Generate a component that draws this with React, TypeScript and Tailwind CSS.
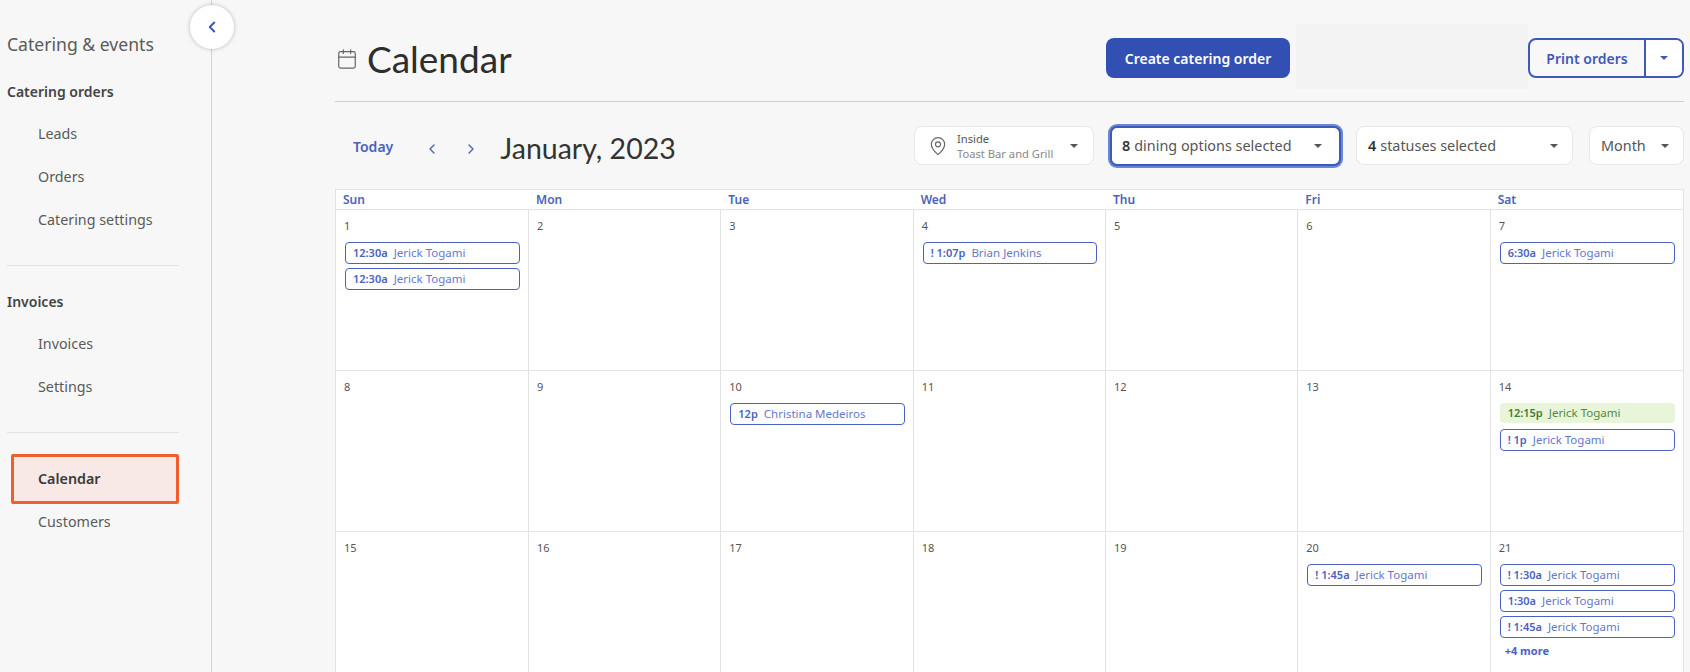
import React from "react";
import { ChevronLeft, ChevronRight, Calendar as CalIcon, MapPin } from "lucide-react";

const Caret = ({ c = "border-t-[#555555]" }: { c?: string }) => (
  <span className={`inline-block w-0 h-0 border-l-[4px] border-r-[4px] border-t-[4px] border-l-transparent border-r-transparent ${c}`} />
);

type Ev = { t: string; n: string; bang?: boolean; green?: boolean };
const Chip = ({ e }: { e: Ev }) => (
  <div className={`rounded-[4px] pr-[6px] flex items-center text-[11px] whitespace-nowrap ${e.green ? "h-[20px] mb-[2px] pl-[8px] bg-[#e9f5d9] text-[#3f7d35]" : "h-[22px] pl-[7px] border border-[#4a62c4] bg-white text-[#4a62c0]"}`}>
    <span className="font-semibold">{e.bang ? "! " : ""}{e.t}</span>
    <span className={`ml-[6px] text-[11.5px] ${e.green ? "text-[#4f8a45]" : "text-[#6478cc]"}`}>{e.n}</span>
  </div>
);

const J = "Jerick Togami";
const cells: { d: number; ev?: Ev[]; more?: boolean }[] = [
  { d: 1, ev: [{ t: "12:30a", n: J }, { t: "12:30a", n: J }] },
  { d: 2 },
  { d: 3 },
  { d: 4, ev: [{ t: "1:07p", n: "Brian Jenkins", bang: true }] },
  { d: 5 },
  { d: 6 },
  { d: 7, ev: [{ t: "6:30a", n: J }] },
  { d: 8 },
  { d: 9 },
  { d: 10, ev: [{ t: "12p", n: "Christina Medeiros" }] },
  { d: 11 },
  { d: 12 },
  { d: 13 },
  { d: 14, ev: [{ t: "12:15p", n: J, green: true }, { t: "1p", n: J, bang: true }] },
  { d: 15 },
  { d: 16 },
  { d: 17 },
  { d: 18 },
  { d: 19 },
  { d: 20, ev: [{ t: "1:45a", n: J, bang: true }] },
  { d: 21, ev: [{ t: "1:30a", n: J, bang: true }, { t: "1:30a", n: J }, { t: "1:45a", n: J, bang: true }], more: true },
];
const days = ["Sun", "Mon", "Tue", "Wed", "Thu", "Fri", "Sat"];

const NavItem = ({ children }: { children: React.ReactNode }) => (
  <div className="h-[43px] pl-[31px] flex items-center text-[14.3px] text-[#5a5a5a]">{children}</div>
);

export default function App() {
  return (
    <div className="w-[1690px] h-[672px] overflow-hidden flex bg-[#f7f7f7] text-[#333333] font-['Noto_Sans',sans-serif]">
      <aside className="relative w-[212px] shrink-0 border-r border-[#d4d4d4] pl-[7px] pr-[32px] pt-[30px]">
        <div className="text-[17.6px] leading-[28px] text-[#5a5a5a]">Catering &amp; events</div>
        <div className="mt-[24px] text-[14px] leading-[20px] font-semibold text-[#444444]">Catering orders</div>
        <div className="mt-[10px]">
          <NavItem>Leads</NavItem>
          <NavItem>Orders</NavItem>
          <NavItem>Catering settings</NavItem>
        </div>
        <div className="mt-[24px] h-px bg-[#e3e3e3]" />
        <div className="mt-[26px] text-[14px] leading-[20px] font-semibold text-[#444444]">Invoices</div>
        <div className="mt-[10px]">
          <NavItem>Invoices</NavItem>
          <NavItem>Settings</NavItem>
        </div>
        <div className="mt-[24px] h-px bg-[#e3e3e3]" />
        <div className="mt-[21px] ml-[4px] h-[50px] border-[3px] border-[#f0602c] rounded-[2px] bg-[#f8e9e6] flex items-center pl-[24px] text-[14.3px] font-semibold text-[#3a3a3a]">Calendar</div>
        <div className="h-[36px] pl-[31px] flex items-center text-[14.3px] text-[#5a5a5a]">Customers</div>
        <button className="absolute right-[-23px] top-[5px] z-10 w-[44px] h-[44px] rounded-full bg-white shadow-[0_0_4px_rgba(0,0,0,0.25)] flex items-center justify-center">
          <ChevronLeft size={18} strokeWidth={2.5} className="text-[#3a55b5]" />
        </button>
      </aside>

      <main className="flex-1 min-w-0 pl-[123px] pr-[6px]">
        <header className="h-[102px] border-b border-[#cfcfcf] flex items-start">
          <div className="flex items-center mt-[36px] h-[46px]">
            <CalIcon size={22} strokeWidth={1.3} className="text-[#666666] ml-[1px]" />
            <h1 className="ml-[9px] text-[37px] leading-[46px] font-['Lato',sans-serif] font-normal text-[#2e2e2e]">Calendar</h1>
          </div>
          <div className="ml-auto flex items-start">
            <button className="mt-[38px] w-[184px] h-[40px] rounded-[8px] bg-[#324fb3] text-white text-[14px] font-semibold">Create catering order</button>
            <div className="ml-[6px] mt-[24px] w-[232px] h-[65px] bg-[#f3f3f3]" />
            <div className="mt-[38px] flex h-[40px] w-[156px] rounded-[8px] border-2 border-[#3f59b8] bg-[#f8f8f8] overflow-hidden">
              <div className="w-[116px] flex items-center justify-center text-[14px] font-semibold text-[#3f59b8] border-r-2 border-[#3f59b8]">Print orders</div>
              <div className="flex-1 flex items-center justify-center bg-white"><Caret c="border-t-[#3f59b8]" /></div>
            </div>
          </div>
        </header>

        <div className="h-[87px] flex items-center">
          <div className="flex items-center mt-[6px]">
            <span className="ml-[18px] -mt-[4px] text-[14px] font-semibold text-[#4a62c0]">Today</span>
            <ChevronLeft size={16} strokeWidth={2} className="ml-[31px] text-[#4a62c0]" />
            <ChevronRight size={16} strokeWidth={2} className="ml-[23px] text-[#4a62c0]" />
            <span className="ml-[21px] text-[28.5px] font-['Lato',sans-serif] text-[#333333]">January, 2023</span>
          </div>
          <div className="ml-auto flex items-center">
            <div className="w-[180px] h-[39px] rounded-[8px] border border-[#e8e8e8] bg-white flex items-center pl-[13px] pr-[15px]">
              <MapPin size={20} strokeWidth={1.4} className="text-[#666666]" />
              <div className="ml-[9px] flex-1 text-[11.2px] leading-[15px]">
                <div className="text-[#555555]">Inside</div>
                <div className="text-[#888888] whitespace-nowrap">Toast Bar and Grill</div>
              </div>
              <Caret />
            </div>
            <div className="ml-[16px] w-[231px] h-[40px] rounded-[7px] border-[2px] border-[#3f59b8] ring-2 ring-[#6a86d6] bg-white flex items-center pl-[10px] pr-[17px] text-[14.4px] text-[#555555]">
              <span className="font-semibold text-[#333333]">8</span><span className="ml-1 flex-1">dining options selected</span><Caret />
            </div>
            <div className="ml-[15px] w-[217px] h-[39px] rounded-[8px] border border-[#e8e8e8] bg-white flex items-center pl-[11px] pr-[14px] text-[14.4px] text-[#555555]">
              <span className="font-semibold text-[#333333]">4</span><span className="ml-1 flex-1">statuses selected</span><Caret />
            </div>
            <div className="ml-[16px] w-[95px] h-[39px] rounded-[8px] border border-[#e8e8e8] bg-white flex items-center pl-[11px] pr-[14px] text-[14.4px] text-[#555555]">
              <span className="flex-1">Month</span><Caret />
            </div>
          </div>
        </div>

        <div className="border-l border-r border-t border-[#e3e3e3] bg-white">
          <div className="grid grid-cols-[193px_repeat(6,1fr)] h-[20px] border-b border-[#e3e3e3]">
            {days.map((d) => (
              <div key={d} className="pl-[7px] text-[12px] leading-[19px] font-semibold text-[#4a62c0]">{d}</div>
            ))}
          </div>
          <div className="grid grid-cols-[193px_repeat(6,1fr)] auto-rows-[161px]">
            {cells.map((c) => (
              <div key={c.d} className="border-r border-b border-[#e3e3e3] [&:nth-child(7n)]:border-r-0 pt-[6px] pl-[9px] pr-[8px]">
                <div className="text-[11px] leading-[20px] text-[#555555] -ml-[1px]">{c.d}</div>
                <div className="mt-[6px] flex flex-col gap-[4px]">
                  {c.ev?.map((e, i) => <Chip key={i} e={e} />)}
                </div>
                {c.more && <div className="mt-[5px] pl-[5px] text-[11px] font-bold text-[#4a62c0]">+4 more</div>}
              </div>
            ))}
          </div>
        </div>
      </main>
    </div>
  );
}
